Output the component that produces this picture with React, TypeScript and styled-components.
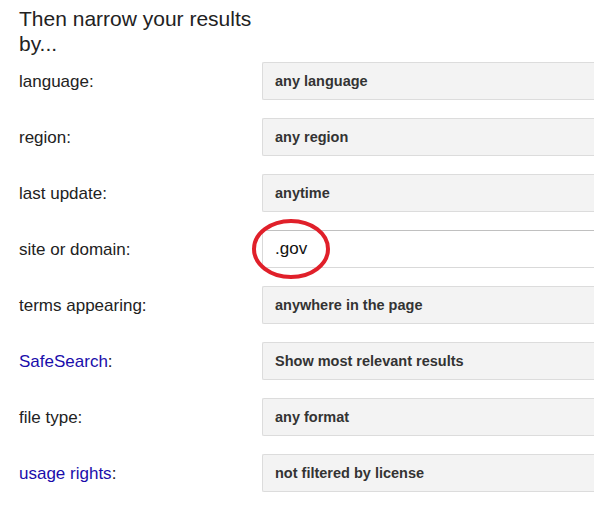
import styled, { createGlobalStyle } from "styled-components";

const rows = [
  { id: "lr", label: "language", value: "any language" },
  { id: "cr", label: "region", value: "any region" },
  { id: "qdr", label: "last update", value: "anytime" },
  { id: "as_sitesearch", label: "site or domain", value: ".gov", input: true },
  { id: "as_occt", label: "terms appearing", value: "anywhere in the page" },
  { id: "safe", label: "SafeSearch", value: "Show most relevant results", link: true },
  { id: "as_filetype", label: "file type", value: "any format" },
  { id: "tbs", label: "usage rights", value: "not filtered by license", link: true },
];

const GlobalStyle = createGlobalStyle`
  html, body {
    margin: 0;
    padding: 0;
    background: #fff;
  }
  body {
    font-family: Arial, "Liberation Sans", sans-serif;
  }
`;

const Container = styled.div`
  padding: 6px 0 0 19px;
`;

const Title = styled.h2`
  margin: 0;
  width: 270px;
  font-size: 21px;
  line-height: 25px;
  font-weight: normal;
  color: #222;
`;

const FieldList = styled.div`
  display: flex;
  flex-direction: column;
  gap: 18px;
  margin-top: 6px;
`;

const Row = styled.div`
  display: flex;
  align-items: center;
  height: 38px;
`;

const Label = styled.div`
  width: 243px;
  flex-shrink: 0;
  padding-top: 2px;
  font-size: 17px;
  color: #222;
`;

const LabelLink = styled.a`
  color: #1a0dab;
  text-decoration: none;
`;

/* the boxes run on past the window edge, so they have no right border */
const Dropdown = styled.div`
  box-sizing: border-box;
  flex: 1;
  height: 38px;
  display: flex;
  align-items: center;
  padding: 0 12px;
  background: #f3f3f3;
  border: 1px solid #dcdcdc;
  border-right: none;
  border-radius: 2px 0 0 2px;
  font-size: 14.5px;
  font-weight: bold;
  color: #333;
  white-space: nowrap;
`;

const InputWrap = styled.div`
  position: relative;
  flex: 1;
  height: 38px;
`;

const TextInput = styled.div`
  box-sizing: border-box;
  height: 100%;
  display: flex;
  align-items: center;
  padding: 0 12px;
  background: #fff;
  border: 1px solid #d9d9d9;
  border-top-color: #c0c0c0;
  border-right: none;
  font-size: 17px;
  color: #111;
`;

const Circle = styled.svg`
  position: absolute;
  left: -11px;
  top: -11px;
  pointer-events: none;
`;

const App = () => {
  return (
    <>
      <GlobalStyle />
      <Container>
        <Title>Then narrow your results by...</Title>
        <FieldList>
          {rows.map((row) => (
            <Row key={row.id}>
              <Label>
                {row.link ? <LabelLink href="#">{row.label}</LabelLink> : row.label}:
              </Label>
              {row.input ? (
                <InputWrap>
                  <TextInput>{row.value}</TextInput>
                  <Circle width="82" height="62" viewBox="0 0 82 62">
                    <ellipse cx="40" cy="30" rx="37" ry="28" fill="none" stroke="#e0202a" strokeWidth="4" />
                  </Circle>
                </InputWrap>
              ) : (
                <Dropdown>{row.value}</Dropdown>
              )}
            </Row>
          ))}
        </FieldList>
      </Container>
    </>
  );
};

export default App;
